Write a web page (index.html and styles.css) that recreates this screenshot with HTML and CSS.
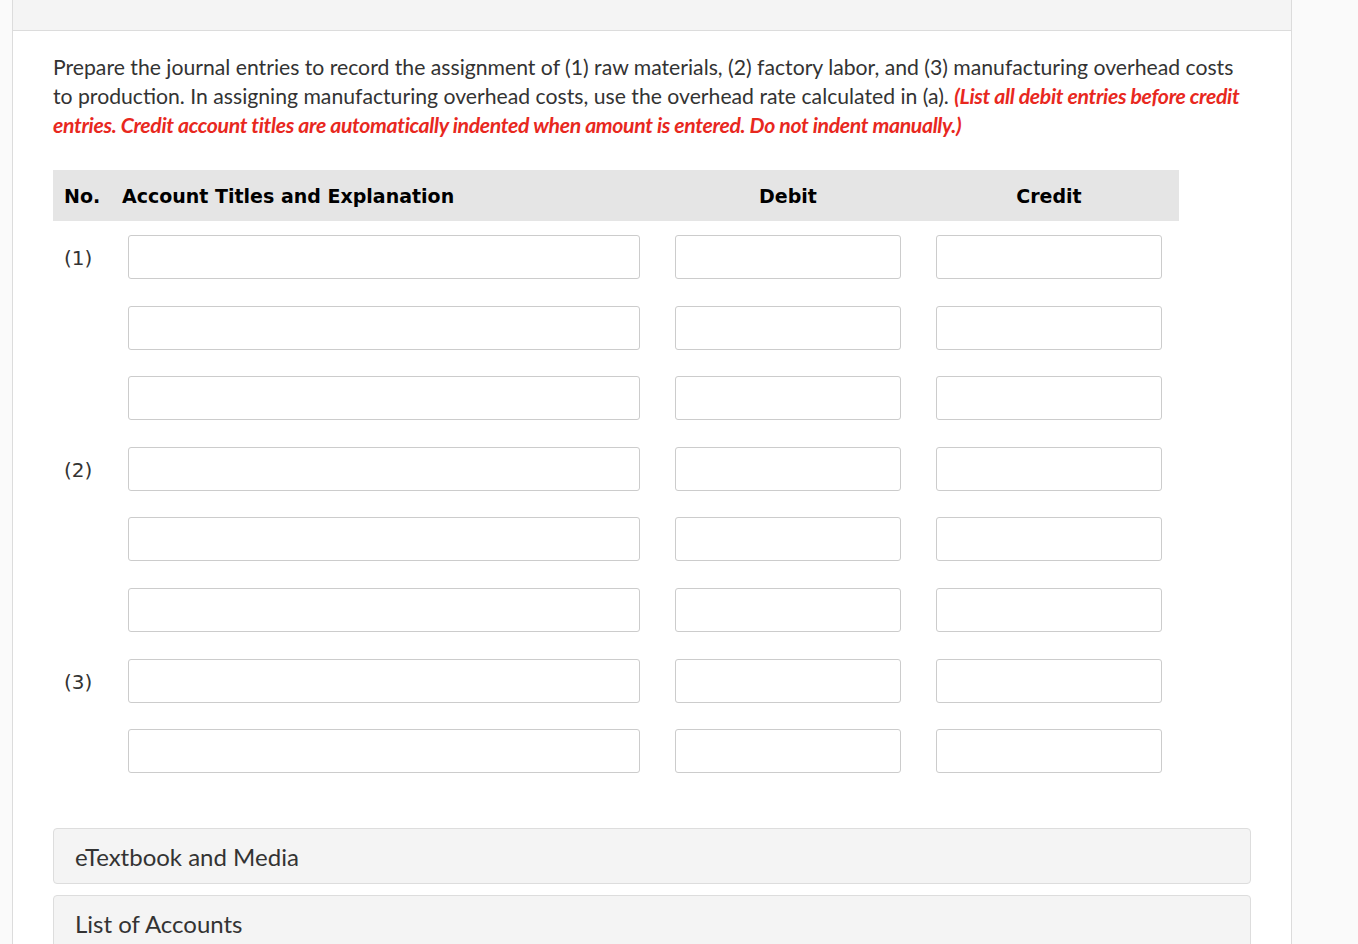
FILE: index.html
```html
<!DOCTYPE html>
<html>
<head>
<meta charset="utf-8">
<link rel="stylesheet" href="styles.css">
</head>
<body>
<div class="page">
  <div class="panel">
    <div class="topband"></div>
    <div class="content">
      <p class="question">Prepare the journal entries to record the assignment of (1) raw materials, (2) factory labor, and (3) manufacturing overhead costs to production. In assigning manufacturing overhead costs, use the overhead rate calculated in (a). <span class="note">(List all debit entries before credit entries. Credit account titles are automatically indented when amount is entered. Do not indent manually.)</span></p>

      <div class="journal">
        <div class="jhead">
          <div class="hno">No.</div>
          <div class="hacct">Account Titles and Explanation</div>
          <div class="hamt">Debit</div>
          <div class="hamt">Credit</div>
        </div>
        <div class="jbody">
          <div class="lbl">(1)</div>
          <input class="fld" type="text"><input class="fld" type="text"><input class="fld" type="text">
          <div class="lbl"></div>
          <input class="fld" type="text"><input class="fld" type="text"><input class="fld" type="text">
          <div class="lbl"></div>
          <input class="fld" type="text"><input class="fld" type="text"><input class="fld" type="text">
          <div class="lbl">(2)</div>
          <input class="fld" type="text"><input class="fld" type="text"><input class="fld" type="text">
          <div class="lbl"></div>
          <input class="fld" type="text"><input class="fld" type="text"><input class="fld" type="text">
          <div class="lbl"></div>
          <input class="fld" type="text"><input class="fld" type="text"><input class="fld" type="text">
          <div class="lbl">(3)</div>
          <input class="fld" type="text"><input class="fld" type="text"><input class="fld" type="text">
          <div class="lbl"></div>
          <input class="fld" type="text"><input class="fld" type="text"><input class="fld" type="text">
        </div>
      </div>

      <div class="acc">eTextbook and Media</div>
      <div class="acc">List of Accounts</div>
    </div>
  </div>
</div>
</body>
</html>
```

FILE: styles.css
```css
html, body {
  margin: 0;
  padding: 0;
  background: #fafafa;
}
.page {
  padding-left: 12px;
  height: 944px;
  overflow: hidden;
}
.panel {
  width: 1278px;
  background: #fff;
  border-left: 1px solid #dcdcdc;
  border-right: 1px solid #dcdcdc;
  min-height: 1100px;
}
.topband {
  height: 30px;
  background: #f4f4f4;
  border-bottom: 1px solid #dcdcdc;
}
.content {
  padding: 22px 0 0 40px;
  width: 1198px;
}
.question {
  margin: 0;
  font-family: Lato, "Liberation Sans", sans-serif;
  font-size: 21.2px;
  line-height: 29px;
  color: #333;
}
.note {
  color: #e8281e;
  font-weight: bold;
  font-style: italic;
  letter-spacing: -0.33px;
}
.journal {
  margin-top: 30px;
  width: 1126px;
}
.jhead, .jbody {
  display: grid;
  grid-template-columns: 40px 512px 226px 226px;
  column-gap: 35px;
  padding-right: 17px;
}
.jhead {
  height: 51px;
  background: #e5e5e5;
  align-items: center;
  font-family: "DejaVu Sans", Verdana, sans-serif;
  font-weight: bold;
  font-size: 19px;
  color: #000;
}
.hno {
  padding-left: 11px;
  white-space: nowrap;
}
.hacct {
  margin-left: -6px;
  white-space: nowrap;
}
.hamt {
  text-align: center;
}
.jbody {
  padding-top: 14px;
  row-gap: 26.6px;
}
.lbl {
  padding-left: 11px;
  align-self: center;
  padding-top: 2px;
  white-space: nowrap;
  font-family: "DejaVu Sans", Verdana, sans-serif;
  font-size: 20px;
  color: #333;
}
.fld {
  box-sizing: border-box;
  height: 44px;
  width: 100%;
  margin: 0;
  border: 1px solid #cccccc;
  border-radius: 3px;
  background: #fff;
  padding: 0 8px;
  font-size: 16px;
}
.acc {
  box-sizing: border-box;
  height: 56px;
  margin-top: 11px;
  border: 1px solid #dddddd;
  border-radius: 4px;
  background: #f4f4f4;
  padding-left: 21px;
  display: flex;
  align-items: center;
  font-family: Lato, "Liberation Sans", sans-serif;
  font-size: 24px;
  color: #333;
}
.journal + .acc {
  margin-top: 55px;
}
```
